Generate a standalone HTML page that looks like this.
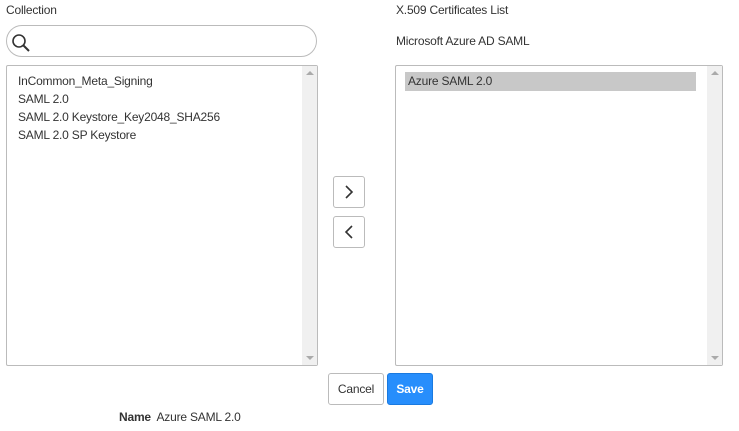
<!DOCTYPE html>
<html><head><style>
body{margin:0;width:739px;height:431px;background:#fff;font-family:"Liberation Sans",sans-serif;font-size:12px;color:#333;position:relative;overflow:hidden;letter-spacing:-0.2px}
.a{position:absolute}
.box{position:absolute;border:1px solid #bbb;border-radius:2px;background:#fff;box-sizing:border-box}
.sb{position:absolute;top:0;right:0;width:15px;bottom:0;background:#f0f0f0}
.up,.dn{position:absolute;left:4px;width:0;height:0;border-left:4px solid transparent;border-right:4px solid transparent}
.up{top:5px;border-bottom:4px solid #aaa}
.dn{bottom:5px;border-top:4px solid #aaa}
.btn{position:absolute;border:1px solid #bbb;border-radius:3px;background:#fff;box-sizing:border-box}
</style></head><body>
<div class="a" style="left:6px;top:3px">Collection</div>
<div class="a" style="left:396px;top:3px">X.509 Certificates List</div>
<div class="a" style="left:396px;top:34px">Microsoft Azure AD SAML</div>
<div class="box" style="left:6px;top:25px;width:311px;height:32px;border-radius:16px">
<svg class="a" style="left:4px;top:7px" width="22" height="22" viewBox="0 0 22 22"><circle cx="8" cy="8" r="6" fill="none" stroke="#333" stroke-width="1.6"/><path d="M12.5 12.5L18 18" stroke="#333" stroke-width="2"/></svg>
</div>
<div class="box" style="left:6px;top:65px;width:312px;height:301px">
<div class="sb"><div class="up"></div><div class="dn"></div></div>
<div class="a" style="left:11px;top:6px;line-height:18px">InCommon_Meta_Signing<br>SAML 2.0<br>SAML 2.0 Keystore_Key2048_SHA256<br>SAML 2.0 SP Keystore</div>
</div>
<div class="box" style="left:395px;top:65px;width:328px;height:301px">
<div class="sb"><div class="up"></div><div class="dn"></div></div>
<div class="a" style="left:9px;top:6px;width:291px;height:19px;background:#c8c8c8;line-height:19px;padding-left:3px;box-sizing:border-box">Azure SAML 2.0</div>
</div>
<div class="btn" style="left:333px;top:176px;width:32px;height:32px"><svg width="30" height="30"><path d="M12 9l6 6-6 6" fill="none" stroke="#333" stroke-width="1.6"/></svg></div>
<div class="btn" style="left:333px;top:216px;width:32px;height:32px"><svg width="30" height="30"><path d="M18 9l-6 6 6 6" fill="none" stroke="#333" stroke-width="1.6"/></svg></div>
<div class="btn" style="left:328px;top:373px;width:56px;height:32px;line-height:30px;text-align:center">Cancel</div>
<div class="btn" style="left:387px;top:373px;width:46px;height:32px;line-height:30px;text-align:center;background:#278efc;border-color:#1a7ae0;color:#fff;font-weight:bold">Save</div>
<div class="a" style="left:119px;top:410px"><b>Name</b>&nbsp; Azure SAML 2.0</div>
</body></html>
